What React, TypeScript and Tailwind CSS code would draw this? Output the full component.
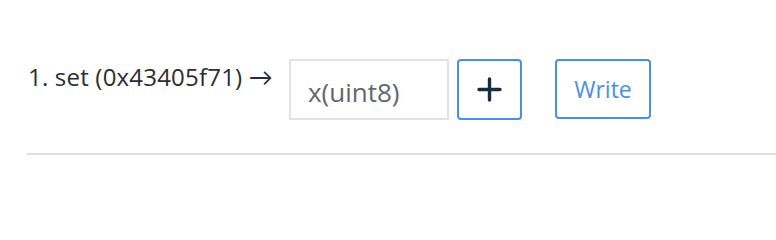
export default function App() {
  return (
    <div className="w-[776px] h-[202px] bg-white pl-[27px] pt-[59px] font-['Open_Sans','Noto_Sans',sans-serif]">
      <div className="flex items-start">
        <span className="ml-[1px] text-[24px] leading-[36px] tracking-[0.2px] text-[#2a2d31] whitespace-nowrap">
          1. set (0x43405f71) <span className="font-['Lato',sans-serif]">→</span>
        </span>
        <input
          className="ml-[16px] w-[160px] h-[61px] border-2 border-[#dfe2e6] pl-[17px] pr-[4px] pt-[4px] text-[26px] text-[#5f666d] placeholder:text-[#5f666d] outline-none"
          placeholder="x(uint8)"
        />
        <button className="ml-[8px] w-[65px] h-[61px] flex items-center justify-center border-2 border-[#4a90e2] rounded-[4px]">
          <svg width="25" height="25" viewBox="0 0 25 25" fill="none" stroke="#1b2a41" strokeWidth="3.4" strokeLinecap="round">
            <path d="M12.5 2v21M2 12.5h21" />
          </svg>
        </button>
        <button className="ml-[33px] w-[96px] h-[60px] border-2 border-[#4a90e2] rounded-[4px] text-[23px] text-[#4a90e2]">
          Write
        </button>
      </div>
      <div className="mt-[33px] h-[2px] bg-[#dcdfe3]" />
    </div>
  );
}
